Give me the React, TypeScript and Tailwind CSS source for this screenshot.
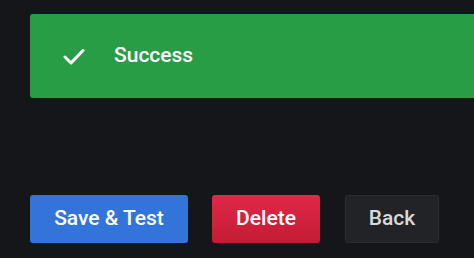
import React from 'react';

const btn = 'h-[48px] rounded-[3px] flex items-center justify-center text-[21px] font-medium';

export default function App() {
  return (
    <div className="h-[258px] w-full overflow-hidden bg-[#141619] pl-[30px] pt-[14px]" style={{ fontFamily: 'Roboto, "Liberation Sans", sans-serif' }}>
      <div className="-mr-[20px] flex h-[84px] items-center rounded-[3px] bg-[#299c46] pl-[33px] shadow-[0_1px_0_#0a1f10]">
        <svg width="22" height="17" viewBox="0 0 22 17" fill="none" stroke="white" strokeWidth="3" strokeLinecap="round" strokeLinejoin="round">
          <path d="M2 9 L8 15 L20 2.5" />
        </svg>
        <span className="ml-[29px] text-[21px] font-medium text-white">Success</span>
      </div>
      <div className="mt-[97px] flex gap-[24px]">
        <button className={`${btn} w-[158px] bg-[#3274d9] text-white`}>Save &amp; Test</button>
        <button className={`${btn} w-[108px] bg-gradient-to-b from-[#e0284a] to-[#c41a33] text-white`}>Delete</button>
        <button className={`${btn} ml-[1px] w-[94px] border border-[#2c2e33] bg-[#222327] text-[#d8d9da]`}>Back</button>
      </div>
    </div>
  );
}
